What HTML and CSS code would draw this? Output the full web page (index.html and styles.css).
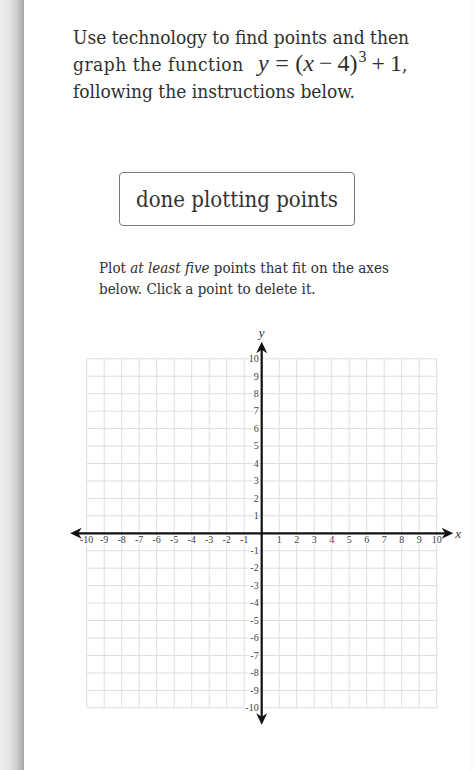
FILE: index.html
```html
<!DOCTYPE html>
<html lang="en">
<head>
<meta charset="utf-8">
<title>Graph the function</title>
<link rel="stylesheet" href="styles.css">
</head>
<body>
<div class="page">
  <div class="edge"></div>
  <main class="content">
    <p class="prompt">Use technology to find points and then<br><span class="lead">graph the function</span> <span class="math"><i>y</i><span class="rel">=</span>(<i>x</i><span class="bin">−</span>4)<sup>3</sup><span class="bin">+</span>1</span>,<br>following the instructions below.</p>
    <button class="done" type="button">done plotting points</button>
    <p class="instr">Plot <em>at least five</em> points that fit on the axes<br>below. Click a point to delete it.</p>
    <div class="graph">
      <svg class="plane" width="410" height="410" viewBox="0 0 410 410">
        <g transform="translate(201.7 209.3)">
          <g transform="scale(17.5 17.45)">
            <path class="grid" vector-effect="non-scaling-stroke" d="M-10 -10V10M-9 -10V10M-8 -10V10M-7 -10V10M-6 -10V10M-5 -10V10M-4 -10V10M-3 -10V10M-2 -10V10M-1 -10V10M1 -10V10M2 -10V10M3 -10V10M4 -10V10M5 -10V10M6 -10V10M7 -10V10M8 -10V10M9 -10V10M10 -10V10M-10 -10H10M-10 -9H10M-10 -8H10M-10 -7H10M-10 -6H10M-10 -5H10M-10 -4H10M-10 -3H10M-10 -2H10M-10 -1H10M-10 1H10M-10 2H10M-10 3H10M-10 4H10M-10 5H10M-10 6H10M-10 7H10M-10 8H10M-10 9H10M-10 10H10"/>
          </g>
          <g class="xlabels">
            <text x="-175" y="9.8">-10</text><text x="-157.5" y="9.8">-9</text><text x="-140" y="9.8">-8</text><text x="-122.5" y="9.8">-7</text><text x="-105" y="9.8">-6</text><text x="-87.5" y="9.8">-5</text><text x="-70" y="9.8">-4</text><text x="-52.5" y="9.8">-3</text><text x="-35" y="9.8">-2</text><text x="-17.5" y="9.8">-1</text>
            <text x="17.5" y="9.8">1</text><text x="35" y="9.8">2</text><text x="52.5" y="9.8">3</text><text x="70" y="9.8">4</text><text x="87.5" y="9.8">5</text><text x="105" y="9.8">6</text><text x="122.5" y="9.8">7</text><text x="140" y="9.8">8</text><text x="157.5" y="9.8">9</text><text x="175" y="9.8">10</text>
          </g>
          <g class="ylabels">
            <text x="-3" y="-171.2">10</text><text x="-3" y="-153.75">9</text><text x="-3" y="-136.3">8</text><text x="-3" y="-118.85">7</text><text x="-3" y="-101.4">6</text><text x="-3" y="-83.95">5</text><text x="-3" y="-66.5">4</text><text x="-3" y="-49.05">3</text><text x="-3" y="-31.6">2</text><text x="-3" y="-14.15">1</text>
            <text x="-3" y="20.75">-1</text><text x="-3" y="38.2">-2</text><text x="-3" y="55.65">-3</text><text x="-3" y="73.1">-4</text><text x="-3" y="90.55">-5</text><text x="-3" y="108">-6</text><text x="-3" y="125.45">-7</text><text x="-3" y="142.9">-8</text><text x="-3" y="160.35">-9</text><text x="-3" y="177.8">-10</text>
          </g>
          <path class="axis" d="M-184 0H184M0 -184V184"/>
          <path class="head" d="M191.5 0L180 -5.5L183.5 0L180 5.5Z"/>
          <path class="head" d="M-191.5 0L-180 -5.5L-183.5 0L-180 5.5Z"/>
          <path class="head" d="M0 -191.5L-5.5 -180L0 -183.5L5.5 -180Z"/>
          <path class="head" d="M0 191.5L-5.5 180L0 183.5L5.5 180Z"/>
          <text class="axname" x="193.5" y="4.5">x</text>
          <text class="axname axname-y" x="0" y="-196.5">y</text>
        </g>
      </svg>
    </div>
  </main>
  <div class="gutter"></div>
</div>
</body>
</html>
```

FILE: styles.css
```css
html, body {
  margin: 0;
  padding: 0;
  background: #ffffff;
}

body {
  font-family: "DejaVu Serif", "Liberation Serif", serif;
  font-stretch: condensed;
  color: #2f2f2f;
}

.page {
  display: flex;
  width: 474px;
  height: 770px;
  overflow: hidden;
}

.edge {
  flex: 0 0 24px;
  background: linear-gradient(to right, #efefef 0%, #e4e4e4 40%, #d0d0d0 68%, #b7b7b7 86%, #a5a5a5 100%);
}

.content {
  flex: 1 1 auto;
  display: flex;
  flex-direction: column;
  align-items: flex-start;
  padding-top: 24px;
}

.gutter {
  flex: 0 0 10px;
  background: #fcfcfc;
}

.prompt {
  margin: 0 0 0 49px;
  font-size: 19px;
  line-height: 27px;
  white-space: nowrap;
}

.lead {
  letter-spacing: 0.5px;
}

.math {
  margin-left: 9px;
  font-family: "Liberation Serif", serif;
  font-stretch: normal;
  font-size: 24px;
  line-height: 20px;
}

.math i {
  font-style: italic;
}

.math .rel {
  margin: 0 6.5px;
}

.math .bin {
  margin: 0 5px;
}

.math sup {
  font-size: 16px;
  line-height: 0;
  vertical-align: 9px;
  margin-left: 1px;
}

.done {
  margin: 67px 0 0 95px;
  width: 236px;
  height: 54px;
  padding: 0;
  background: #ffffff;
  border: 1.5px solid #7a7a7a;
  border-radius: 4px;
  font-family: inherit;
  font-stretch: condensed;
  font-size: 22px;
  color: #333333;
}

.instr {
  margin: 32px 0 0 75px;
  font-size: 15px;
  line-height: 21px;
}

.graph {
  margin: 24px 0 0 36px;
}

.plane {
  display: block;
}

.grid {
  fill: none;
  stroke: #dedede;
  stroke-width: 1;
}

.axis {
  fill: none;
  stroke: #111111;
  stroke-width: 2.2;
}

.head {
  fill: #111111;
}

.xlabels text,
.ylabels text {
  font-family: "Liberation Serif", serif;
  font-size: 10px;
  fill: #3d3d3d;
  stroke: #ffffff;
  stroke-width: 2.5px;
  paint-order: stroke;
}

.xlabels text {
  text-anchor: middle;
}

.ylabels text {
  text-anchor: end;
}

.axname {
  font-family: "Liberation Serif", serif;
  font-style: italic;
  font-size: 13px;
  fill: #333333;
}

.axname-y {
  text-anchor: middle;
}
```
